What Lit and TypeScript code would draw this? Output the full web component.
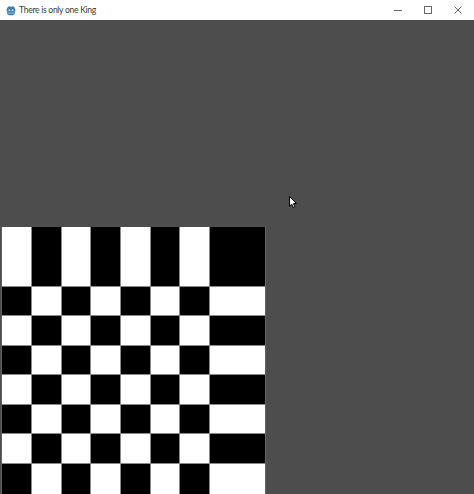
import { LitElement, html, css, svg } from "lit";
import { customElement } from "lit/decorators.js";

const COLS = [29, 29, 28, 29, 29, 28, 29, 55];
const ROWS = [59, 28, 29, 28, 29, 28, 29, 30];

@customElement("app-root")
export class AppRoot extends LitElement {
  static styles = css`
    :host {
      display: block;
      width: 474px;
      height: 494px;
      overflow: hidden;
      background: #4d4d4d;
      position: relative;
      font-family: "Lato", "Liberation Sans", sans-serif;
    }
    .titlebar {
      height: 20px;
      background: #fff;
      display: flex;
      align-items: center;
      padding-left: 6px;
      color: #3a3a3a;
      font-size: 8.6px;
      letter-spacing: -0.3px;
    }
    .icon { width: 10px; height: 11px; margin-right: 3px; display: block; }
    .title { flex: 1; white-space: nowrap; }
    .controls { display: flex; margin-right: 1px; }
    .ctl { width: 30px; height: 20px; display: flex; align-items: center; justify-content: center; }
    .ctl svg { width: 10px; height: 10px; display: block; }
    .ctl path, .ctl rect { fill: none; stroke: #666; stroke-width: 1; }
    .client { padding: 207px 0 0 1px; }
    .frame { width: max-content; padding: 0 1px; background: #626262; }
    .board {
      display: grid;
      gap: 1px;
      background: #8a8a8a;
      width: max-content;
      grid-template-columns: 29px 29px 28px 29px 29px 28px 29px 55px;
      grid-template-rows: 59px 28px 29px 28px 29px 28px 29px 30px;
    }
    .w { background: #fff; }
    .b { background: #000; }
    .cursor { position: absolute; left: 289px; top: 196px; width: 8px; height: 12px; display: block; }
  `;

  render() {
    const cells = ROWS.flatMap((_, r) =>
      COLS.map((_, c) => html`<div class=${(r + c) % 2 === 0 ? "w" : "b"}></div>`)
    );
    return html`
      <div class="titlebar">
        <svg class="icon" viewBox="0 0 10 11">
          <path d="M1.5 2.5 L3 1 L4 1.8 L6 1.8 L7 1 L8.5 2.5 L9.7 5.5 L8.8 6 L8.8 9 L7 10.3 L3 10.3 L1.2 9 L1.2 6 L0.3 5.5 Z" fill="#3f7cad"></path>
          <circle cx="3.4" cy="5.2" r="1" fill="#cfe0ec"></circle>
          <circle cx="6.6" cy="5.2" r="1" fill="#cfe0ec"></circle>
          <path d="M2 8 H8" stroke="#cfe0ec" stroke-width="0.7"></path>
        </svg>
        <span class="title">There is only one King</span>
        <div class="controls">
          <div class="ctl"><svg viewBox="0 0 10 10"><path d="M1 5.5 H9"></path></svg></div>
          <div class="ctl"><svg viewBox="0 0 10 10">${svg`<rect x="1.5" y="1.5" width="7" height="7"></rect>`}</svg></div>
          <div class="ctl"><svg viewBox="0 0 10 10"><path d="M1.5 1.5 L8.5 8.5 M8.5 1.5 L1.5 8.5"></path></svg></div>
        </div>
      </div>
      <div class="client">
        <div class="frame"><div class="board">${cells}</div></div>
      </div>
      <svg class="cursor" viewBox="0 0 8 12">
        <path d="M0.5 0.5 V10.2 L2.7 8.2 L4.1 11.4 L5.8 10.7 L4.4 7.6 L7.4 7.4 Z" fill="#fff" stroke="#000" stroke-width="1"></path>
      </svg>
    `;
  }
}
